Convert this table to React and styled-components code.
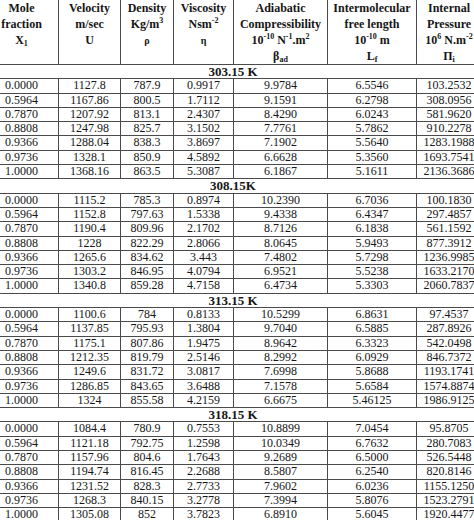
import styled, { createGlobalStyle } from 'styled-components';

const blocks = [
  {
    temp: '303.15 K',
    rows: [
      ['0.0000', '1127.8', '787.9', '0.9917', '9.9784', '6.5546', '103.2532'],
      ['0.5964', '1167.86', '800.5', '1.7112', '9.1591', '6.2798', '308.0956'],
      ['0.7870', '1207.92', '813.1', '2.4307', '8.4290', '6.0243', '581.9620'],
      ['0.8808', '1247.98', '825.7', '3.1502', '7.7761', '5.7862', '910.2278'],
      ['0.9366', '1288.04', '838.3', '3.8697', '7.1902', '5.5640', '1283.1988'],
      ['0.9736', '1328.1', '850.9', '4.5892', '6.6628', '5.3560', '1693.7541'],
      ['1.0000', '1368.16', '863.5', '5.3087', '6.1867', '5.1611', '2136.3686']
    ]
  },
  {
    temp: '308.15K',
    rows: [
      ['0.0000', '1115.2', '785.3', '0.8974', '10.2390', '6.7036', '100.1830'],
      ['0.5964', '1152.8', '797.63', '1.5338', '9.4338', '6.4347', '297.4857'],
      ['0.7870', '1190.4', '809.96', '2.1702', '8.7126', '6.1838', '561.1592'],
      ['0.8808', '1228', '822.29', '2.8066', '8.0645', '5.9493', '877.3912'],
      ['0.9366', '1265.6', '834.62', '3.443', '7.4802', '5.7298', '1236.9985'],
      ['0.9736', '1303.2', '846.95', '4.0794', '6.9521', '5.5238', '1633.2170'],
      ['1.0000', '1340.8', '859.28', '4.7158', '6.4734', '5.3303', '2060.7837']
    ]
  },
  {
    temp: '313.15 K',
    rows: [
      ['0.0000', '1100.6', '784', '0.8133', '10.5299', '6.8631', '97.4537'],
      ['0.5964', '1137.85', '795.93', '1.3804', '9.7040', '6.5885', '287.8926'],
      ['0.7870', '1175.1', '807.86', '1.9475', '8.9642', '6.3323', '542.0498'],
      ['0.8808', '1212.35', '819.79', '2.5146', '8.2992', '6.0929', '846.7372'],
      ['0.9366', '1249.6', '831.72', '3.0817', '7.6998', '5.8688', '1193.1741'],
      ['0.9736', '1286.85', '843.65', '3.6488', '7.1578', '5.6584', '1574.8874'],
      ['1.0000', '1324', '855.58', '4.2159', '6.6675', '5.46125', '1986.9125']
    ]
  },
  {
    temp: '318.15 K',
    rows: [
      ['0.0000', '1084.4', '780.9', '0.7553', '10.8899', '7.0454', '95.8705'],
      ['0.5964', '1121.18', '792.75', '1.2598', '10.0349', '6.7632', '280.7083'],
      ['0.7870', '1157.96', '804.6', '1.7643', '9.2689', '6.5000', '526.5448'],
      ['0.8808', '1194.74', '816.45', '2.2688', '8.5807', '6.2540', '820.8146'],
      ['0.9366', '1231.52', '828.3', '2.7733', '7.9602', '6.0236', '1155.1250'],
      ['0.9736', '1268.3', '840.15', '3.2778', '7.3994', '5.8076', '1523.2791'],
      ['1.0000', '1305.08', '852', '3.7823', '6.8910', '5.6045', '1920.4477']
    ]
  }
];

const widths = [74, 62, 53, 60, 94, 89, 65];

const App = () => {
  return (
    <>
      <GlobalStyle />
      <Page>
        <Table>
          <colgroup>
            {widths.map((w, i) => (
              <col key={i} style={{ width: w }} />
            ))}
          </colgroup>
          <thead>
            <tr>
              <HeadCell>
                Mole<br />fraction<br />X<sub>1</sub>
              </HeadCell>
              <HeadCell>
                Velocity<br />m/sec<br />U
              </HeadCell>
              <HeadCell>
                Density<br />Kg/m<sup>3</sup><br /><Greek>ρ</Greek>
              </HeadCell>
              <HeadCell>
                Viscosity<br />Nsm<sup>-2</sup><br /><Greek>η</Greek>
              </HeadCell>
              <HeadCell>
                Adiabatic<br />Compressibility<br />10<sup>-10</sup> N<sup>-1</sup>.m<sup>2</sup><br />β<sub>ad</sub>
              </HeadCell>
              <HeadCell>
                Intermolecular<br />free length<br />10<sup>-10</sup> m<br />L<sub>f</sub>
              </HeadCell>
              <HeadCell>
                Internal<br />Pressure<br />10<sup>6</sup> N.m<sup>-2</sup><br />Π<sub>i</sub>
              </HeadCell>
            </tr>
          </thead>
          {blocks.map((block) => (
            <tbody key={block.temp}>
              <tr>
                <TempCell colSpan={7}>{block.temp}</TempCell>
              </tr>
              {block.rows.map((row, r) => (
                <tr key={r}>
                  {row.map((val, c) => (
                    <Cell key={c}>{val}</Cell>
                  ))}
                </tr>
              ))}
            </tbody>
          ))}
        </Table>
      </Page>
    </>
  );
};

const GlobalStyle = createGlobalStyle`
  html, body {
    margin: 0;
    padding: 0;
    background: #ffffff;
    overflow: hidden;
  }
`;

const Page = styled.div`
  width: 474px;
  height: 520px;
  overflow: hidden;
  background: #ffffff;
`;

const Table = styled.table`
  margin-left: -16px;
  margin-top: -1px;
  width: 497px;
  table-layout: fixed;
  border-collapse: collapse;
  font-family: "Liberation Serif", "Times New Roman", serif;
  color: #161616;
`;

const HeadCell = styled.th`
  height: 63px;
  padding: 0;
  border: 1px solid #4a4a4a;
  vertical-align: top;
  text-align: center;
  font-size: 12px;
  font-weight: bold;
  line-height: 16px;
  white-space: nowrap;

  sup, sub {
    font-size: 8px;
    line-height: 0;
  }

  sup {
    vertical-align: 5px;
  }

  sub {
    vertical-align: -2px;
  }
`;

const Greek = styled.span`
  font-size: 10px;
`;

const TempCell = styled.td`
  height: 13.3px;
  padding: 0;
  border: 1px solid #4a4a4a;
  border-left: none;
  border-right: none;
  text-align: center;
  font-size: 13px;
  font-weight: bold;
  line-height: 13.3px;
`;

const Cell = styled.td`
  height: 13.3px;
  padding: 0;
  border: 1px solid #4a4a4a;
  text-align: center;
  font-size: 12px;
  line-height: 13.3px;
  white-space: nowrap;
`;

export default App;
